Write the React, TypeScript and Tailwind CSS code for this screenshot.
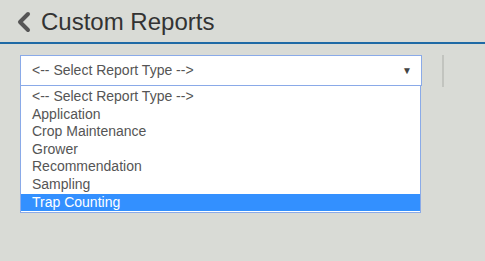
import { ChevronLeft } from 'lucide-react';

const options = [
  '<-- Select Report Type -->',
  'Application',
  'Crop Maintenance',
  'Grower',
  'Recommendation',
  'Sampling',
  'Trap Counting',
];

export default function App() {
  return (
    <div
      className="h-[261px] w-[485px] overflow-hidden bg-[#d9dbd6]"
      style={{ fontFamily: '"Liberation Sans", Arial, sans-serif' }}
    >
      <div className="flex h-[44px] items-center border-b-2 border-[#1f6aa5] pl-[8px] pt-[1px]">
        <ChevronLeft className="h-[32px] w-[32px] text-[#555]" strokeWidth={3} />
        <h1 className="ml-[1px] text-[24px] leading-none text-[#333]">Custom Reports</h1>
      </div>

      <div className="mt-[11px] flex items-start pl-[20px]">
        <div className="w-[402px]">
          <div className="flex h-[31px] items-center justify-between border border-[#8aaae8] bg-white pl-[11px] pr-[9px] text-[14px] text-[#555]">
            <span>&lt;-- Select Report Type --&gt;</span>
            <span className="text-[10px] text-[#444]">▼</span>
          </div>
          <ul className="w-[401px] border border-t-0 border-[#8aaae8] bg-white pb-[1px] pt-[2px]">
            {options.map((o, i) => (
              <li
                key={o}
                className={
                  'h-[17.6px] pl-[11px] text-[14px] leading-[17.6px] ' +
                  (i === options.length - 1 ? 'bg-[#3390ff] text-white' : 'text-[#555]')
                }
              >
                {o}
              </li>
            ))}
          </ul>
        </div>
        <div className="ml-[20px] h-[32px] w-[2px] bg-[#c2c4bf]" />
      </div>
    </div>
  );
}
